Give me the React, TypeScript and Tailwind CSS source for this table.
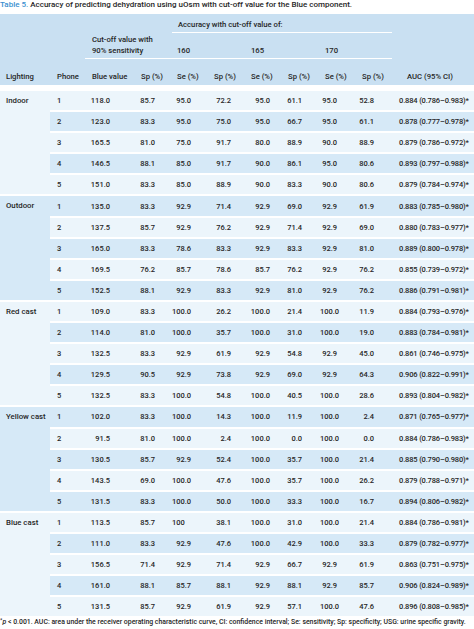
import React from "react";

type Row = [string, string, string, string, string, string, string, string, string, string];

const groups: { name: string; rows: Row[] }[] = [
  {
    name: "Indoor",
    rows: [
      ["1", "118.0", "85.7", "95.0", "72.2", "95.0", "61.1", "95.0", "52.8", "0.884 (0.786–0.983)*"],
      ["2", "123.0", "83.3", "95.0", "75.0", "95.0", "66.7", "95.0", "61.1", "0.878 (0.777–0.978)*"],
      ["3", "165.5", "81.0", "75.0", "91.7", "80.0", "88.9", "90.0", "88.9", "0.879 (0.786–0.972)*"],
      ["4", "146.5", "88.1", "85.0", "91.7", "90.0", "86.1", "95.0", "80.6", "0.893 (0.797–0.988)*"],
      ["5", "151.0", "83.3", "85.0", "88.9", "90.0", "83.3", "90.0", "80.6", "0.879 (0.784–0.974)*"],
    ],
  },
  {
    name: "Outdoor",
    rows: [
      ["1", "135.0", "83.3", "92.9", "71.4", "92.9", "69.0", "92.9", "61.9", "0.883 (0.785–0.980)*"],
      ["2", "137.5", "85.7", "92.9", "76.2", "92.9", "71.4", "92.9", "69.0", "0.880 (0.783–0.977)*"],
      ["3", "165.0", "83.3", "78.6", "83.3", "92.9", "83.3", "92.9", "81.0", "0.889 (0.800–0.978)*"],
      ["4", "169.5", "76.2", "85.7", "78.6", "85.7", "76.2", "92.9", "76.2", "0.855 (0.739–0.972)*"],
      ["5", "152.5", "88.1", "92.9", "83.3", "92.9", "81.0", "92.9", "76.2", "0.886 (0.791–0.981)*"],
    ],
  },
  {
    name: "Red cast",
    rows: [
      ["1", "109.0", "83.3", "100.0", "26.2", "100.0", "21.4", "100.0", "11.9", "0.884 (0.793–0.976)*"],
      ["2", "114.0", "81.0", "100.0", "35.7", "100.0", "31.0", "100.0", "19.0", "0.883 (0.784–0.981)*"],
      ["3", "132.5", "83.3", "92.9", "61.9", "92.9", "54.8", "92.9", "45.0", "0.861 (0.746–0.975)*"],
      ["4", "129.5", "90.5", "92.9", "73.8", "92.9", "69.0", "92.9", "64.3", "0.906 (0.822–0.991)*"],
      ["5", "132.5", "83.3", "100.0", "54.8", "100.0", "40.5", "100.0", "28.6", "0.893 (0.804–0.982)*"],
    ],
  },
  {
    name: "Yellow cast",
    rows: [
      ["1", "102.0", "83.3", "100.0", "14.3", "100.0", "11.9", "100.0", "2.4", "0.871 (0.765–0.977)*"],
      ["2", "91.5", "81.0", "100.0", "2.4", "100.0", "0.0", "100.0", "0.0", "0.884 (0.786–0.983)*"],
      ["3", "130.5", "85.7", "92.9", "52.4", "100.0", "35.7", "100.0", "21.4", "0.885 (0.790–0.980)*"],
      ["4", "143.5", "69.0", "100.0", "47.6", "100.0", "35.7", "100.0", "26.2", "0.879 (0.788–0.971)*"],
      ["5", "131.5", "83.3", "100.0", "50.0", "100.0", "33.3", "100.0", "16.7", "0.894 (0.806–0.982)*"],
    ],
  },
  {
    name: "Blue cast",
    rows: [
      ["1", "113.5", "85.7", "100", "38.1", "100.0", "31.0", "100.0", "21.4", "0.884 (0.786–0.981)*"],
      ["2", "111.0", "83.3", "92.9", "47.6", "100.0", "42.9", "100.0", "33.3", "0.879 (0.782–0.977)*"],
      ["3", "156.5", "71.4", "92.9", "71.4", "92.9", "66.7", "92.9", "61.9", "0.863 (0.751–0.975)*"],
      ["4", "161.0", "88.1", "85.7", "88.1", "92.9", "88.1", "92.9", "85.7", "0.906 (0.824–0.989)*"],
      ["5", "131.5", "85.7", "92.9", "61.9", "92.9", "57.1", "100.0", "47.6", "0.896 (0.808–0.985)*"],
    ],
  },
];

// right padding of each numeric column so the figures end where the original's do
const numPad = ["pr-[25px]", "pr-[17px]", "pr-[18px]", "pr-[15px]", "pr-[13px]", "pr-[18px]", "pr-[20px]", "pr-[18px]"];

const LIGHT = "bg-[#ecf5fb]";
const BLUE = "bg-[#d6e9f7]";

function Num({ v }: { v: string }) {
  // keep decimal alignment for the lone "100"
  if (!v.includes(".")) {
    return (
      <>
        {v}
        <span className="invisible">.0</span>
      </>
    );
  }
  return <>{v}</>;
}

export default function App() {
  return (
    <div
      className="w-[474px] h-[629px] overflow-hidden bg-white text-[#262626] text-[7.5px] font-medium"
      style={{ fontFamily: "Roboto, 'Noto Sans', sans-serif" }}
    >
      <div className="h-[14px] leading-[9px] whitespace-nowrap text-[8px]">
        <span className="text-[#3a8fd0]">Table 5.</span> Accuracy of predicting dehydration using uOsm with cut-off value
        for the Blue component.
      </div>

      <table className="w-[474px] table-fixed border-separate border-spacing-0 text-[7.7px]">
        <colgroup>
          <col className="w-[50px]" />
          <col className="w-[35px]" />
          <col className="w-[50px]" />
          <col className="w-[37px]" />
          <col className="w-[37px]" />
          <col className="w-[37px]" />
          <col className="w-[37px]" />
          <col className="w-[37px]" />
          <col className="w-[37px]" />
          <col className="w-[35px]" />
          <col className="w-[82px]" />
        </colgroup>
        <thead className="bg-[#c9e0f2]">
          <tr>
            <th colSpan={4} className="h-[19px] p-0" />
            <th colSpan={6} className="h-[19px] p-0 pl-[6px] pt-[2px] text-left font-medium border-b border-white align-middle leading-[11px]">
              Accuracy with cut-off value of:
            </th>
            <th className="h-[19px] p-0" />
          </tr>
          <tr>
            <th colSpan={2} className="h-[26px] p-0" />
            <th colSpan={2} className="h-[26px] p-0 pl-[7px] pb-[2px] text-left font-medium align-bottom leading-[11px] border-b border-white">
              Cut-off value with
              <br />
              90% sensitivity
            </th>
            <th colSpan={2} className="h-[26px] p-0 pl-[5px] pb-[2px] text-left font-medium align-bottom leading-[11px] border-b border-white">
              160
            </th>
            <th colSpan={2} className="h-[26px] p-0 pl-[5px] pb-[2px] text-left font-medium align-bottom leading-[11px] border-b border-white">
              165
            </th>
            <th colSpan={2} className="h-[26px] p-0 pl-[5px] pb-[2px] text-left font-medium align-bottom leading-[11px] border-b border-white">
              170
            </th>
            <th className="h-[26px] p-0" />
          </tr>
          <tr className="[&>th]:h-[26px] [&>th]:p-0 [&>th]:pb-[3px] [&>th]:align-bottom [&>th]:text-left [&>th]:font-medium [&>th]:leading-[11px] [&>th]:whitespace-nowrap">
            <th className="pl-[6px]!">Lighting</th>
            <th className="pl-[7px]!">Phone</th>
            <th className="pl-[7px]!">Blue value</th>
            <th className="pl-[6px]!">Sp (%)</th>
            <th className="pl-[5px]!">Se (%)</th>
            <th className="pl-[5px]!">Sp (%)</th>
            <th className="pl-[5px]!">Se (%)</th>
            <th className="pl-[5px]!">Sp (%)</th>
            <th className="pl-[5px]!">Se (%)</th>
            <th className="pl-[5px]!">Sp (%)</th>
            <th className="pl-[15px]!">AUC (95% CI)</th>
          </tr>
        </thead>
        <tbody className="text-[7.5px]">
          <tr>
            <td colSpan={11} className="h-[4px] p-0 bg-white leading-[0px] text-[0px]" />
          </tr>
          {groups.map((g, gi) =>
            g.rows.map((r, ri) => {
              const idx = gi * 5 + ri;
              const bg = idx % 2 === 1 ? BLUE : LIGHT;
              const groupBg = gi % 2 === 1 ? BLUE : LIGHT;
              return (
                <tr key={`${gi}-${ri}`}>
                  {ri === 0 && (
                    <td
                      rowSpan={5}
                      className={`${groupBg} border-t-2 border-white p-0 pl-[6px] align-top leading-[19px] whitespace-nowrap text-[7.8px]`}
                    >
                      {g.name}
                    </td>
                  )}
                  <td className={`${bg} h-[21.1px] border-t-2 border-white p-0 pl-[7px] leading-[19px]`}>{r[0]}</td>
                  {r.slice(1, 9).map((v, ci) => (
                    <td
                      key={ci}
                      className={`${bg} h-[21.1px] border-t-2 border-white p-0 ${numPad[ci]} text-right leading-[19px] whitespace-nowrap`}
                    >
                      <Num v={v} />
                    </td>
                  ))}
                  <td
                    className={`${bg} h-[21.1px] border-t-2 border-white p-0 pl-[7px] leading-[19px] whitespace-nowrap tracking-[-0.15px]`}
                  >
                    {r[9]}
                  </td>
                </tr>
              );
            })
          )}
        </tbody>
      </table>

      <div className="mt-[1px] leading-[10px] whitespace-nowrap text-[6.9px]">
        <sup className="text-[5.5px]">*</sup>
        <i>p</i> &lt; 0.001. AUC: area under the receiver operating characteristic curve, CI: confidence interval; Se:
        sensitivity; Sp: specificity; USG: urine specific gravity.
      </div>
    </div>
  );
}
